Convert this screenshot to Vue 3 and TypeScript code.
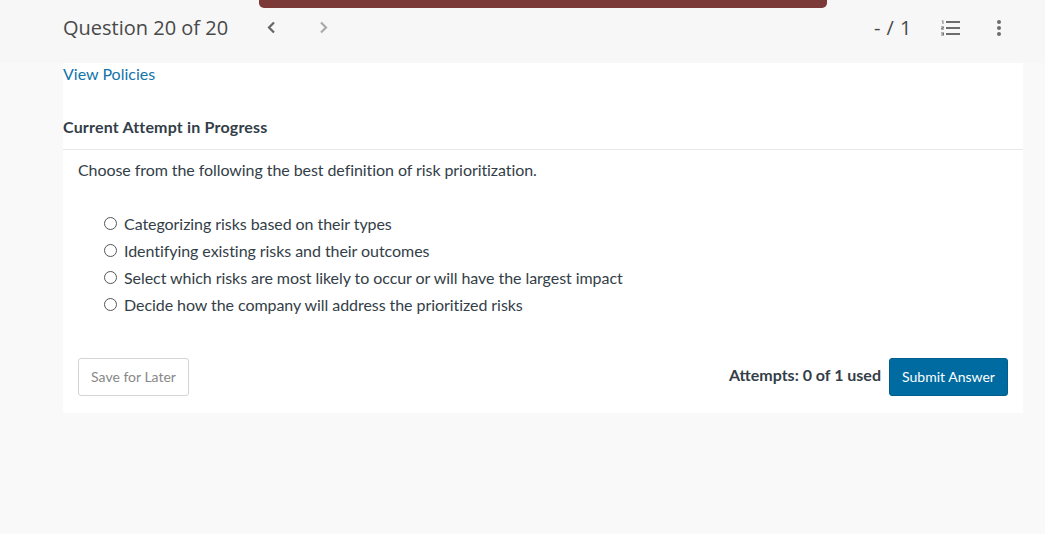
<script setup lang="ts">
const options: string[] = [
  'Categorizing risks based on their types',
  'Identifying existing risks and their outcomes',
  'Select which risks are most likely to occur or will have the largest impact',
  'Decide how the company will address the prioritized risks',
]
</script>

<template>
  <div class="page">
    <header class="topbar">
      <div class="banner"></div>
      <span class="counter">Question 20 of 20</span>
      <div class="arrows">
        <svg width="10" height="13" viewBox="0 0 10 13" fill="none" stroke="#666" stroke-width="2.2">
          <path d="M8 1.5 L3 6.5 L8 11.5" />
        </svg>
        <svg width="10" height="13" viewBox="0 0 10 13" fill="none" stroke="#aaa" stroke-width="2.2">
          <path d="M3 1.5 L8 6.5 L3 11.5" />
        </svg>
      </div>
      <span class="score">- / 1</span>
      <svg class="list-icon" width="20" height="16" viewBox="0 0 20 16" fill="#6d6d6d">
        <rect x="5" y="1" width="14" height="2" />
        <rect x="5" y="7" width="14" height="2" />
        <rect x="5" y="13" width="14" height="2" />
        <path d="M.8 .5h1.6v3.4h-.9v-2.6h-.7z" />
        <path d="M0 6.4h3v1L1.3 8.6h1.7v.8H0v-.9l1.7-1.3H0z" />
        <path d="M0 12.4h3v3.2H0v-.8h2.1v-.5H.7v-.7h1.4v-.4H0z" />
      </svg>
      <svg class="dots" width="6" height="18" viewBox="0 0 6 18" fill="#6d6d6d">
        <circle cx="3" cy="3" r="2" />
        <circle cx="3" cy="9" r="2" />
        <circle cx="3" cy="15" r="2" />
      </svg>
    </header>

    <main class="card">
      <a class="policies" href="#">View Policies</a>
      <h2 class="attempt">Current Attempt in Progress</h2>
      <div class="body">
        <p class="prompt">Choose from the following the best definition of risk prioritization.</p>
        <ul class="options">
          <li v-for="opt in options" :key="opt">
            <span class="radio"></span>
            {{ opt }}
          </li>
        </ul>
        <div class="actions">
          <button class="save">Save for Later</button>
          <span class="used">Attempts: 0 of 1 used</span>
          <button class="submit">Submit Answer</button>
        </div>
      </div>
    </main>
  </div>
</template>

<style>
html,
body {
  margin: 0;
  background: #f9f9f9;
}
</style>

<style scoped>
.page {
  height: 534px;
  overflow: hidden;
  background: #f9f9f9;
  font-family: Lato, sans-serif;
  color: #333e48;
}

.topbar {
  position: relative;
  display: flex;
  align-items: center;
  height: 55px;
  padding: 0 0 8px 63px;
  background: #f7f7f7;
}

.banner {
  position: absolute;
  top: 0;
  left: 259px;
  width: 568px;
  height: 8px;
  background: #7b3938;
  border-radius: 0 0 5px 5px;
}

.counter {
  font-family: "Open Sans", sans-serif;
  font-size: 20px;
  color: #494949;
}

.arrows {
  display: flex;
  gap: 42px;
  margin-left: 38px;
}

.score {
  margin-left: auto;
  font-family: "Open Sans", sans-serif;
  font-size: 20px;
  letter-spacing: 0.5px;
  color: #494949;
}

.list-icon {
  margin-left: 29px;
}

.dots {
  margin-left: 35px;
  margin-right: 43px;
}

.card {
  display: flex;
  flex-direction: column;
  width: 960px;
  height: 350px;
  margin-left: 63px;
  background: #fff;
}

.policies {
  margin-top: 1px;
  font-size: 16px;
  line-height: 20px;
  color: #1274a8;
  text-decoration: none;
}

.attempt {
  margin: 33px 0 0;
  padding-bottom: 12px;
  border-bottom: 1px solid #e8e8e8;
  font-size: 16px;
  font-weight: 700;
  line-height: 20px;
  letter-spacing: 0.18px;
}

.body {
  display: flex;
  flex-direction: column;
  padding: 0 15px;
}

.prompt {
  margin: 10px 0 0;
  font-size: 16px;
  line-height: 20px;
  letter-spacing: -0.07px;
}

.options {
  margin: 30px 0 0;
  padding: 0 0 0 26px;
  list-style: none;
}

.options li {
  display: flex;
  align-items: center;
  gap: 7px;
  height: 27px;
  font-size: 16px;
  letter-spacing: -0.06px;
}

.radio {
  box-sizing: border-box;
  width: 13px;
  height: 13px;
  border: 1.5px solid #555;
  border-radius: 50%;
}

.actions {
  display: flex;
  align-items: center;
  margin-top: 40px;
}

.save,
.submit {
  height: 38px;
  padding-bottom: 3px;
  border-radius: 3px;
  font-family: Lato, sans-serif;
  font-size: 14px;
}

.save {
  width: 111px;
  background: #fff;
  border: 1px solid #d4d4d4;
  color: #888;
}

.used {
  margin-left: auto;
  margin-right: 8px;
  margin-bottom: 5px;
  font-size: 16px;
  font-weight: 700;
}

.submit {
  width: 119px;
  background: #006ba1;
  border: 1px solid #005d8c;
  color: #fff;
}
</style>
